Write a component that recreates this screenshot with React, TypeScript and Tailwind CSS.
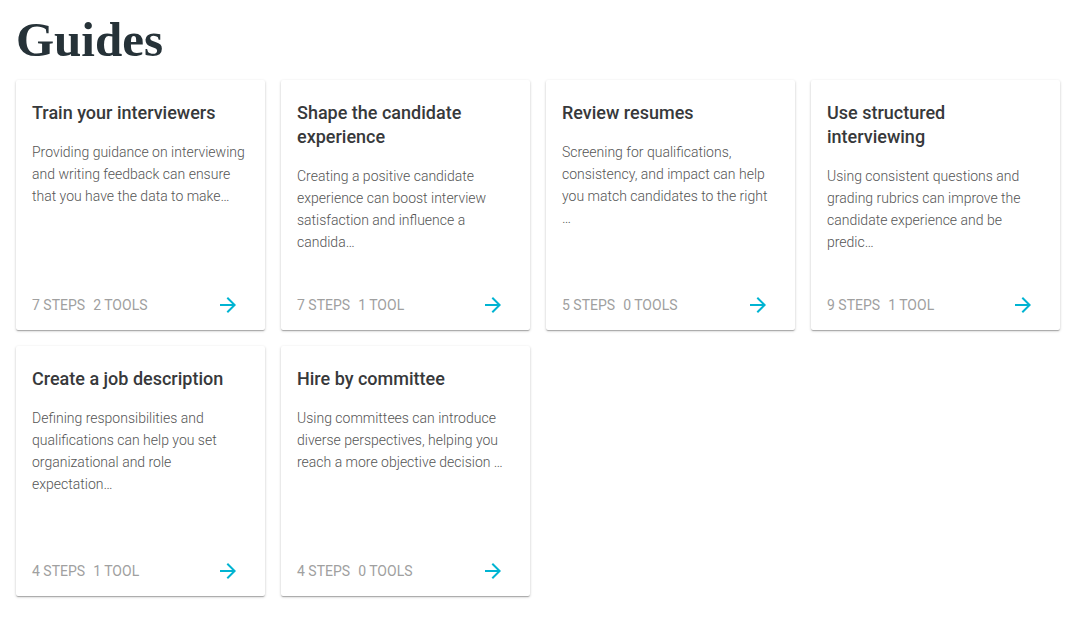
import React from 'react';

interface Guide {
  title: string;
  description: string;
  steps: number;
  tools: number;
}

const guides: Guide[] = [
  {
    title: 'Train your interviewers',
    description: 'Providing guidance on interviewing and writing feedback can ensure that you have the data to make…',
    steps: 7,
    tools: 2,
  },
  {
    title: 'Shape the candidate experience',
    description: 'Creating a positive candidate experience can boost interview satisfaction and influence a candida…',
    steps: 7,
    tools: 1,
  },
  {
    title: 'Review resumes',
    description: 'Screening for qualifications, consistency, and impact can help you match candidates to the right …',
    steps: 5,
    tools: 0,
  },
  {
    title: 'Use structured interviewing',
    description: 'Using consistent questions and grading rubrics can improve the candidate experience and be predic…',
    steps: 9,
    tools: 1,
  },
  {
    title: 'Create a job description',
    description: 'Defining responsibilities and qualifications can help you set organizational and role expectation…',
    steps: 4,
    tools: 1,
  },
  {
    title: 'Hire by committee',
    description: 'Using committees can introduce diverse perspectives, helping you reach a more objective decision …',
    steps: 4,
    tools: 0,
  },
];

const ArrowIcon = () => (
  <svg width="24" height="24" viewBox="0 0 24 24" fill="#00b4d2">
    <path d="M12 4l-1.41 1.41L16.17 11H4v2h12.17l-5.58 5.59L12 20l8-8z" />
  </svg>
);

const GuideCard: React.FC<{ guide: Guide }> = ({ guide }) => (
  <div className="flex h-[250px] flex-col rounded-[2px] bg-white shadow-[0_1px_3px_rgba(0,0,0,0.2),0_1px_1px_rgba(0,0,0,0.14),0_2px_1px_-1px_rgba(0,0,0,0.12)]">
    <div className="px-4 pt-[21px]">
      <h2 className="text-[18px] font-medium leading-6 text-[#37393b]">{guide.title}</h2>
      <p className="mt-[16px] text-[14px] font-light leading-[22px] text-[#555555]">{guide.description}</p>
    </div>
    <div className="mt-auto flex items-center justify-between pb-[13px] pl-4 pr-[25px]">
      <div className="flex gap-2 text-[14px] uppercase text-[#a0a0a0]">
        <span>{guide.steps} Steps</span>
        <span>
          {guide.tools} {guide.tools === 1 ? 'Tool' : 'Tools'}
        </span>
      </div>
      <ArrowIcon />
    </div>
  </div>
);

export default function App() {
  return (
    <div className="min-h-screen bg-white px-4 pb-6" style={{ fontFamily: 'Roboto, "Liberation Sans", sans-serif' }}>
      <h1
        className="pt-[12px] text-[49px] font-bold leading-[56px] text-[#263238]"
        style={{ fontFamily: '"Liberation Serif", "DejaVu Serif", serif' }}
      >
        Guides
      </h1>
      <div className="mt-3 grid w-[1044px] grid-cols-4 gap-4">
        {guides.map((g) => (
          <GuideCard key={g.title} guide={g} />
        ))}
      </div>
    </div>
  );
}
